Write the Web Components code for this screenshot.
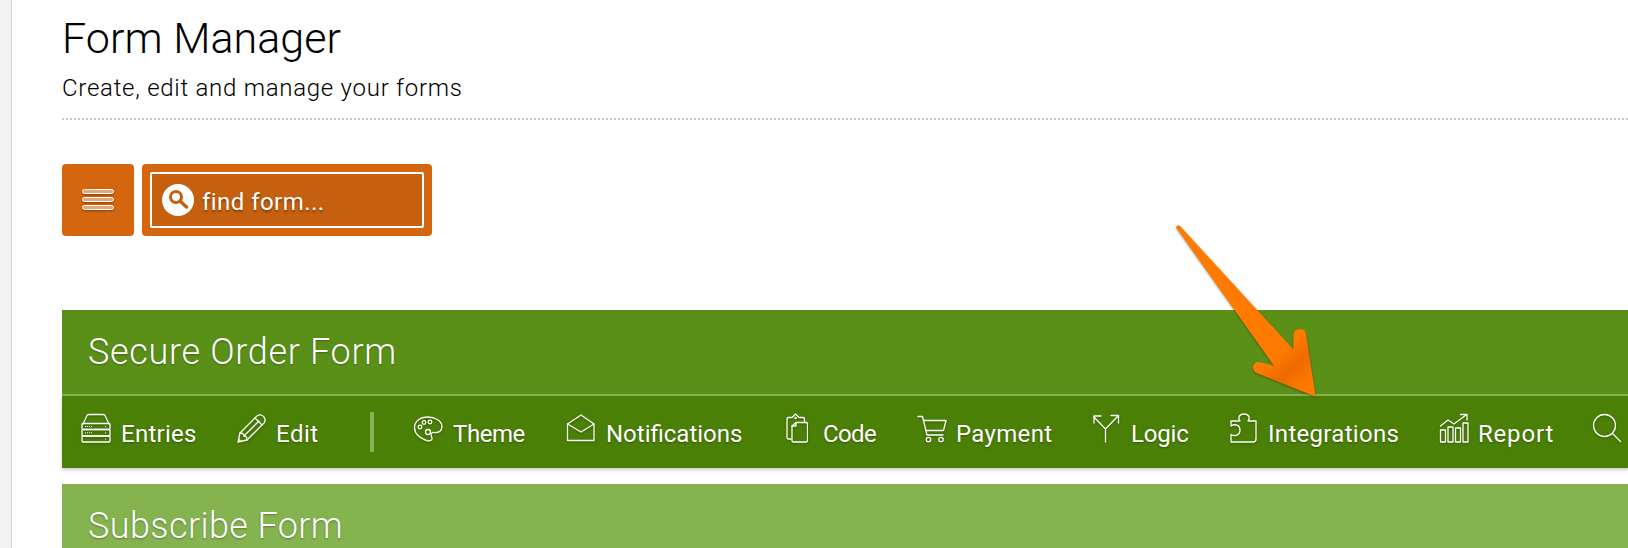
<!DOCTYPE html>
<html>
<head>
<meta charset="utf-8">
<title>Form Manager</title>
<style>
  html, body { margin: 0; height: 100%; overflow: hidden; background: #fff; }
  body { font-family: Roboto, sans-serif; }
</style>
</head>
<body>
<app-shell>
  <page-heading title="Form Manager" subtitle="Create, edit and manage your forms"></page-heading>
  <form-tools placeholder="find form..."></form-tools>
  <form-card name="Secure Order Form" track=".68">
    <nav-item icon="entries" track=".26">Entries</nav-item>
    <nav-item icon="edit" vw="29" track=".5">Edit</nav-item>
    <nav-sep></nav-sep>
    <nav-item icon="theme" track="-.44">Theme</nav-item>
    <nav-item icon="notifications" track="0">Notifications</nav-item>
    <nav-item icon="code" vw="22" gap="15" track="-.6">Code</nav-item>
    <nav-item icon="payment" gap="9" track=".33">Payment</nav-item>
    <nav-item icon="logic" track="-.2">Logic</nav-item>
    <nav-item icon="integrations" vw="28" track=".3">Integrations</nav-item>
    <nav-item icon="report" gap="9" track=".8">Report</nav-item>
    <nav-item icon="search"></nav-item>
  </form-card>
  <form-card name="Subscribe Form" track=".4" light></form-card>
</app-shell>
<pointer-arrow></pointer-arrow>

<script>
  // line icons, 30 high, width comes from the vw attribute
  const ICONS = {
    entries: `<path d="M2 11 L6 2.500 Q6.500 1.500 8 1.500 H22 Q23.500 1.500 24 2.500 L28 11"/>
      <rect x="1" y="10.500" width="28" height="6" rx="1"/>
      <rect x="1" y="16.500" width="28" height="6.500" rx="1"/>
      <rect x="1" y="23" width="28" height="6" rx="1"/>
      <path d="M4 13.500h7M24 13.500h2M4 19.800h7M24 19.800h2M24 26h2" stroke-width="1" stroke-dasharray="1 1" stroke-linecap="butt"/>`,
    edit: `<path d="M1 29 L3 20 L20 3 Q23 0.500 26.500 3.500 Q29.500 7 27 10 L10 27 Z"/>
      <path d="M3 20 Q7 20 7 23 Q10 23 10 27M18 5 L25 12M1.500 26 L4 28.500"/>
      <path d="M7 23 L22 8"/>`,
    theme: `<path d="M15 4 C7 4 1.500 8.500 1.500 14.500 C1.500 21 7.500 25.500 15 28 C19 28 20 26 18.500 23.500 C17 21 19 19 21.500 19.500 C25.500 20 29 18 29 13.500 C29 8 22 4 15 4 Z"/>
      <circle cx="7" cy="14" r="1.800"/><circle cx="11" cy="9.500" r="1.800"/><circle cx="17" cy="9" r="1.800"/><circle cx="15" cy="19" r="2.500"/>`,
    notifications: `<path d="M1.500 11 L15 2 L28 11 V27.500 H1.500 Z"/><path d="M1.500 11 L15 19 L28 11"/>`,
    code: `<path d="M5 26 H2.500 Q1 26 1 24.500 V6 Q1 4.500 2.500 4.500 H6 L9.500 1 L13 4.500 H17 Q18.500 4.500 18.500 6 V9.500"/>
      <path d="M6 13 L10 9.500 H20 Q21.500 9.500 21.500 11 V27.500 Q21.500 29 20 29 H7.500 Q6 29 6 27.500 Z"/><path d="M6 13 H10 V9.500"/><circle cx="9.500" cy="5" r=".6"/>`,
    payment: `<path d="M1 3.500 H5.500 L10 22 H26"/><path d="M6.500 7.500 H29 L26.500 17.500 H9"/>
      <circle cx="11.500" cy="26.500" r="2.200"/><circle cx="24" cy="26.500" r="2.200"/>`,
    logic: `<path d="M14.500 29 V16 L3 4M14.500 16 L27 3"/><path d="M3 10 V3 H10M20 2.500 H27.500 V10"/>`,
    integrations: `<path d="M1 29 H23 Q26 29 26 26 V8 H18 C20.500 5 19 1 14 1 C9 1 7.500 5 10 8 H1 V13 C5 10.500 10 12 10 17 C10 22 5 24 1 21.500 Z"/>`,
    report: `<rect x="1.500" y="17" width="5" height="12"/><rect x="9" y="14" width="5" height="15"/><rect x="16.500" y="15" width="5" height="14"/><rect x="24" y="10" width="5" height="19"/>
      <path d="M1.500 13 L9 7 L15 11 L27 2"/><path d="M21.500 1.500 H28 V7"/>`,
    search: `<circle cx="12.500" cy="12.500" r="11"/><path d="M20.500 20.500 L28.500 28.500"/>`
  };

  class AppShell extends HTMLElement {
    constructor() {
      super();
      this.attachShadow({ mode: "open" });
      this.shadowRoot.innerHTML = `
        <style>
          :host { display: block; height: 548px; box-sizing: border-box; padding-left: 62px; position: relative; overflow: hidden; }
          .rail { position: absolute; left: 0; top: 0; bottom: 0; width: 11px; background: #f1f4f3; border-right: 1px solid #d2d5d4; }
        </style>
        <div class="rail"></div>
        <slot></slot>
      `;
    }
  }

  class PageHeading extends HTMLElement {
    constructor() {
      super();
      this.attachShadow({ mode: "open" });
    }
    connectedCallback() {
      this.shadowRoot.innerHTML = `
        <style>
          :host { display: block; padding-top: 12px; color: #000; }
          h1 { margin: 0; font-size: 43px; line-height: 53px; font-weight: 300; letter-spacing: .05px; }
          p { margin: 7px 0 0; font-size: 24px; line-height: 32px; font-weight: 300; letter-spacing: .73px; }
          .rule { border-top: 2px dotted #c9c9c9; margin-top: 14px; }
        </style>
        <h1>${this.getAttribute("title")}</h1>
        <p>${this.getAttribute("subtitle")}</p>
        <div class="rule"></div>
      `;
    }
  }

  class FormTools extends HTMLElement {
    constructor() {
      super();
      this.attachShadow({ mode: "open" });
    }
    connectedCallback() {
      this.shadowRoot.innerHTML = `
        <style>
          :host { display: flex; gap: 8px; margin-top: 44px; height: 72px; }
          .menu, .find { background: #d4660f; border-radius: 4px; box-sizing: border-box; }
          .menu { width: 72px; display: flex; align-items: center; justify-content: center; }
          .find { width: 290px; padding: 8px; }
          .box { height: 100%; box-sizing: border-box; border: 2px solid #fff; border-radius: 2px; background: #c4600f; display: flex; align-items: center; padding-left: 10px; gap: 8px; }
          .label { color: #fff; font-size: 24px; letter-spacing: .45px; padding-top: 3px; text-shadow: 0 2px 2px rgba(0,0,0,.35); }
          svg { display: block; }
        </style>
        <div class="menu">
          <svg width="34" height="24" viewBox="0 0 34 24" fill="none" stroke="#fff" stroke-width="1" style="filter:drop-shadow(0 1px 1px rgba(0,0,0,.4))">
            <rect x="1.500" y="1.500" width="31" height="4" rx="2" fill="#e5a676"/>
            <rect x="1.500" y="9.500" width="31" height="4" rx="2" fill="#e5a676"/>
            <rect x="1.500" y="17.500" width="31" height="4" rx="2" fill="#e5a676"/>
          </svg>
        </div>
        <div class="find">
          <div class="box">
            <svg width="32" height="32" viewBox="0 0 32 32">
              <circle cx="16" cy="16" r="16" fill="#fff"/>
              <circle cx="14" cy="13" r="5.500" fill="none" stroke="#c4600f" stroke-width="3"/>
              <path d="M18 17 L24.500 23" stroke="#c4600f" stroke-width="3.500" stroke-linecap="round"/>
            </svg>
            <span class="label">${this.getAttribute("placeholder")}</span>
          </div>
        </div>
      `;
    }
  }

  class FormCard extends HTMLElement {
    constructor() {
      super();
      this.attachShadow({ mode: "open" });
    }
    connectedCallback() {
      const light = this.hasAttribute("light");
      this.shadowRoot.innerHTML = `
        <style>
          :host { display: block; margin-top: ${light ? 16 : 74}px; }
          .title { background: ${light ? "#84b34f" : "#5a9018"}; height: 84px; box-sizing: border-box; padding-left: 26px; display: flex; align-items: center; color: #fff; font-size: 36px; font-weight: 300; letter-spacing: ${this.getAttribute("track")}px; text-shadow: 0 1px 2px rgba(0,0,0,.3); }
          .line { height: 2px; background: #85b356; }
          .bar { background: #4b8006; height: 72px; display: grid; grid-template-columns: 156px 133px 43px 153px 220px 131px 174px 139px 209px 153px 30px; align-items: center; padding-left: 19px; box-shadow: 0 2px 3px rgba(0,0,0,.2); white-space: nowrap; }
        </style>
        <div class="title">${this.getAttribute("name")}</div>
        ${light ? "" : `<div class="line"></div><div class="bar"><slot></slot></div>`}
      `;
    }
  }

  class NavItem extends HTMLElement {
    constructor() {
      super();
      this.attachShadow({ mode: "open" });
    }
    connectedCallback() {
      const vw = this.getAttribute("vw") || 30;
      const gap = this.getAttribute("gap") || 10;
      const track = this.getAttribute("track") || 0;
      this.shadowRoot.innerHTML = `
        <style>
          :host { display: flex; align-items: center; gap: ${gap}px; color: #fff; font-size: 24px; letter-spacing: ${track}px; text-shadow: 0 1px 2px rgba(0,0,0,.35); }
          svg { display: block; flex: none; margin-bottom: 8px; fill: none; stroke: #fff; stroke-width: 1.300; stroke-linecap: round; stroke-linejoin: round; filter: drop-shadow(0 1px 1px rgba(0,0,0,.3)); }
          .text { padding-top: 3px; }
        </style>
        <svg width="${vw}" height="30" viewBox="0 0 ${vw} 30">${ICONS[this.getAttribute("icon")]}</svg>
        <span class="text"><slot></slot></span>
      `;
    }
  }

  class NavSep extends HTMLElement {
    constructor() {
      super();
      this.attachShadow({ mode: "open" });
      this.shadowRoot.innerHTML = `
        <style>
          :host { display: block; width: 4px; height: 40px; background: #85b356; }
        </style>
      `;
    }
  }

  // the annotation drawn on top of the screenshot
  class PointerArrow extends HTMLElement {
    constructor() {
      super();
      this.attachShadow({ mode: "open" });
      this.shadowRoot.innerHTML = `
        <style>
          :host { position: absolute; left: 1150px; top: 210px; width: 200px; height: 200px; display: block; }
          svg { display: block; filter: drop-shadow(0 1px 1px rgba(60,40,0,.55)); }
        </style>
        <svg width="200" height="200" viewBox="0 0 600 600">
          <defs>
            <linearGradient id="fade" gradientUnits="userSpaceOnUse" x1="320" y1="330" x2="480" y2="520">
              <stop offset="0" stop-color="#ff7a00"/>
              <stop offset=".5" stop-color="#ff7a00"/>
              <stop offset=".72" stop-color="#ee6a00"/>
              <stop offset="1" stop-color="#ff7a00"/>
            </linearGradient>
          </defs>
          <path fill="url(#fade)" d="M78 52 Q83 42 90 48 L430 418 L430 375 Q432 357 450 357 Q466 357 468 372 L497 560 L325 491 Q307 484 309 470 Q314 452 332 457 L372 467 Z"/>
        </svg>
      `;
    }
  }

  customElements.define("app-shell", AppShell);
  customElements.define("page-heading", PageHeading);
  customElements.define("form-tools", FormTools);
  customElements.define("form-card", FormCard);
  customElements.define("nav-item", NavItem);
  customElements.define("nav-sep", NavSep);
  customElements.define("pointer-arrow", PointerArrow);
</script>
</body>
</html>
